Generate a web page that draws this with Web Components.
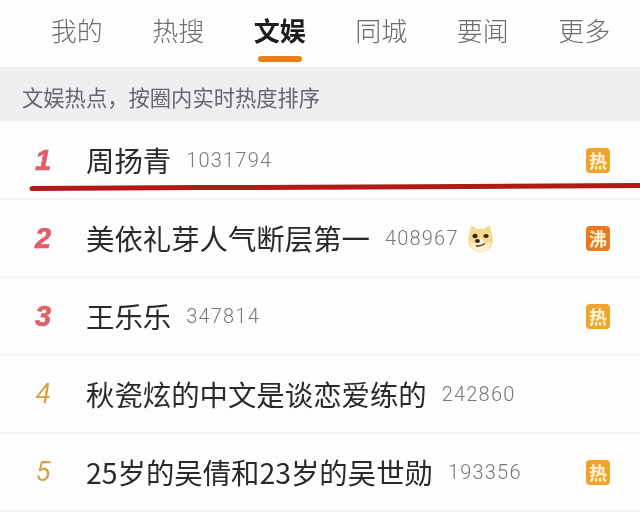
<!DOCTYPE html>
<html lang="zh">
<head>
<meta charset="utf-8">
<title>文娱</title>
<style>
html, body { margin: 0; background: #fdfdfe; }
body { font-family: "Noto Sans CJK SC", sans-serif; overflow: hidden; }
</style>
</head>
<body>
<hot-page>
    <hot-tabs active="文娱" items="我的,热搜,文娱,同城,要闻,更多"></hot-tabs>
    <hot-banner>文娱热点，按圈内实时热度排序</hot-banner>
    <hot-row rank="1" count="1031794" badge="热">周扬青</hot-row>
    <hot-row rank="2" count="408967" badge="沸">美依礼芽人气断层第一<doge-face slot="extra"></doge-face></hot-row>
    <hot-row rank="3" count="347814" badge="热">王乐乐</hot-row>
    <hot-row rank="4" count="242860">秋瓷炫的中文是谈恋爱练的</hot-row>
    <hot-row rank="5" count="193356" badge="热">25岁的吴倩和23岁的吴世勋</hot-row>
</hot-page>

<script>
class HotPage extends HTMLElement {
    constructor() {
        super();
        this.attachShadow({mode: "open"}).innerHTML = `
        <style>
        :host { display: block; position: relative; width: 640px; height: 513px; overflow: hidden; background: #fdfdfe; filter: blur(0.35px); }
        svg { position: absolute; left: 0; top: 178px; }
        </style>
        <slot></slot>
        <svg width="640" height="16" viewBox="0 0 640 16">
            <path d="M32 10.5 L200 9.6 L420 8.8 L640 7.4" fill="none" stroke="#ae1a14" stroke-width="5" stroke-linecap="round"/>
        </svg>`;
    }
}

class HotTabs extends HTMLElement {
    constructor() {
        super();
        this.shadowDOM = this.attachShadow({mode: "open"});
    }

    connectedCallback() {
        const active = this.getAttribute("active");
        const tabs = this.getAttribute("items").split(",").map(name =>
            `<div class="tab ${name === active ? "on" : ""}">${name}</div>`).join("");
        this.shadowDOM.innerHTML = `
        <style>
        :host { display: grid; grid-template-columns: repeat(6, 1fr); height: 67px; padding: 0 5px 0 26px; box-sizing: border-box; }
        .tab { position: relative; text-align: center; font-size: 26px; line-height: 60px; color: #6b6b70; font-weight: 300; }
        .on { color: #1d1d1f; font-weight: 700; }
        .on::after { content: ""; position: absolute; left: 50%; margin-left: -22px; bottom: 5px; width: 44px; height: 6px; border-radius: 3px; background: #e87e1c; }
        </style>
        ${tabs}`;
    }
}

class HotBanner extends HTMLElement {
    constructor() {
        super();
        this.attachShadow({mode: "open"}).innerHTML = `
        <style>
        :host { display: flex; align-items: center; height: 54px; padding: 4px 0 0 22px; margin-bottom: 1px; box-sizing: border-box; background: #eeeff1; color: #66666b; font-size: 21.3px; }
        </style>
        <slot></slot>`;
    }
}

class HotRow extends HTMLElement {
    constructor() {
        super();
        this.shadowDOM = this.attachShadow({mode: "open"});
    }

    connectedCallback() {
        const rank = Number(this.getAttribute("rank"));
        const badge = this.getAttribute("badge");
        const badgeHtml = badge ? `<span class="badge ${badge === "沸" ? "boil" : ""}">${badge}</span>` : "";
        this.shadowDOM.innerHTML = `
        <style>
        :host { display: flex; align-items: center; height: 78px; box-sizing: border-box; padding-right: 30px; border-bottom: 2px solid #f3f4f6; }
        .rank { width: 86px; flex: none; text-align: center; font: italic 700 29px "Liberation Sans", sans-serif; color: #e0606a; -webkit-text-stroke: 0.7px #e0606a; }
        .rank.low { font: italic 400 27px "Roboto", sans-serif; color: #d3a548; -webkit-text-stroke: 0; }
        .title { font-size: 28.4px; color: #2a2a2e; white-space: nowrap; line-height: 40px; }
        .count { margin-left: 15px; font: 300 20px "Roboto", sans-serif; letter-spacing: 1.2px; color: #77777c; }
        .badge { margin-left: auto; flex: none; width: 24px; height: 25px; border-radius: 4px; background: #efa52c; color: #fff5dc; font-size: 18px; font-weight: 700; line-height: 25px; text-align: center; }
        .boil { background: #e87a1f; }
        </style>
        <div class="rank ${rank > 3 ? "low" : ""}">${rank}</div>
        <div class="title"><slot></slot></div>
        <div class="count">${this.getAttribute("count")}</div>
        <slot name="extra"></slot>
        ${badgeHtml}`;
    }
}

class DogeFace extends HTMLElement {
    constructor() {
        super();
        this.attachShadow({mode: "open"}).innerHTML = `
        <style>
        :host { display: block; margin-left: 8px; width: 27px; height: 29px; flex: none; }
        </style>
        <svg width="27" height="29" viewBox="0 0 27 29">
            <path d="M4 1.5 Q7 1.5 9.5 5 Q13.5 4 17.5 5 Q20 1.5 23 1.5 L25 11 Q27 17 24.5 22 Q20 28 13.5 28 Q7 28 2.5 22 Q0 17 2 11 Z" fill="#f5d98f"/>
            <path d="M3 17 Q4 27 13.5 27.5 Q23 27 24 17 Q21 22 17 18 Q14 11 10 18 Q6 21 3 17 Z" fill="#fdf4d8"/>
            <ellipse cx="8" cy="12" rx="2.6" ry="2.2" fill="#33241a"/>
            <ellipse cx="19" cy="12" rx="2.6" ry="2" fill="#33241a"/>
            <ellipse cx="10.5" cy="17" rx="2.4" ry="2" fill="#33241a"/>
            <path d="M9 21.5 Q13 23 18 19.5" fill="none" stroke="#5a4028" stroke-width="1.5"/>
        </svg>`;
    }
}

customElements.define("hot-page", HotPage);
customElements.define("hot-tabs", HotTabs);
customElements.define("hot-banner", HotBanner);
customElements.define("hot-row", HotRow);
customElements.define("doge-face", DogeFace);
</script>
</body>
</html>
